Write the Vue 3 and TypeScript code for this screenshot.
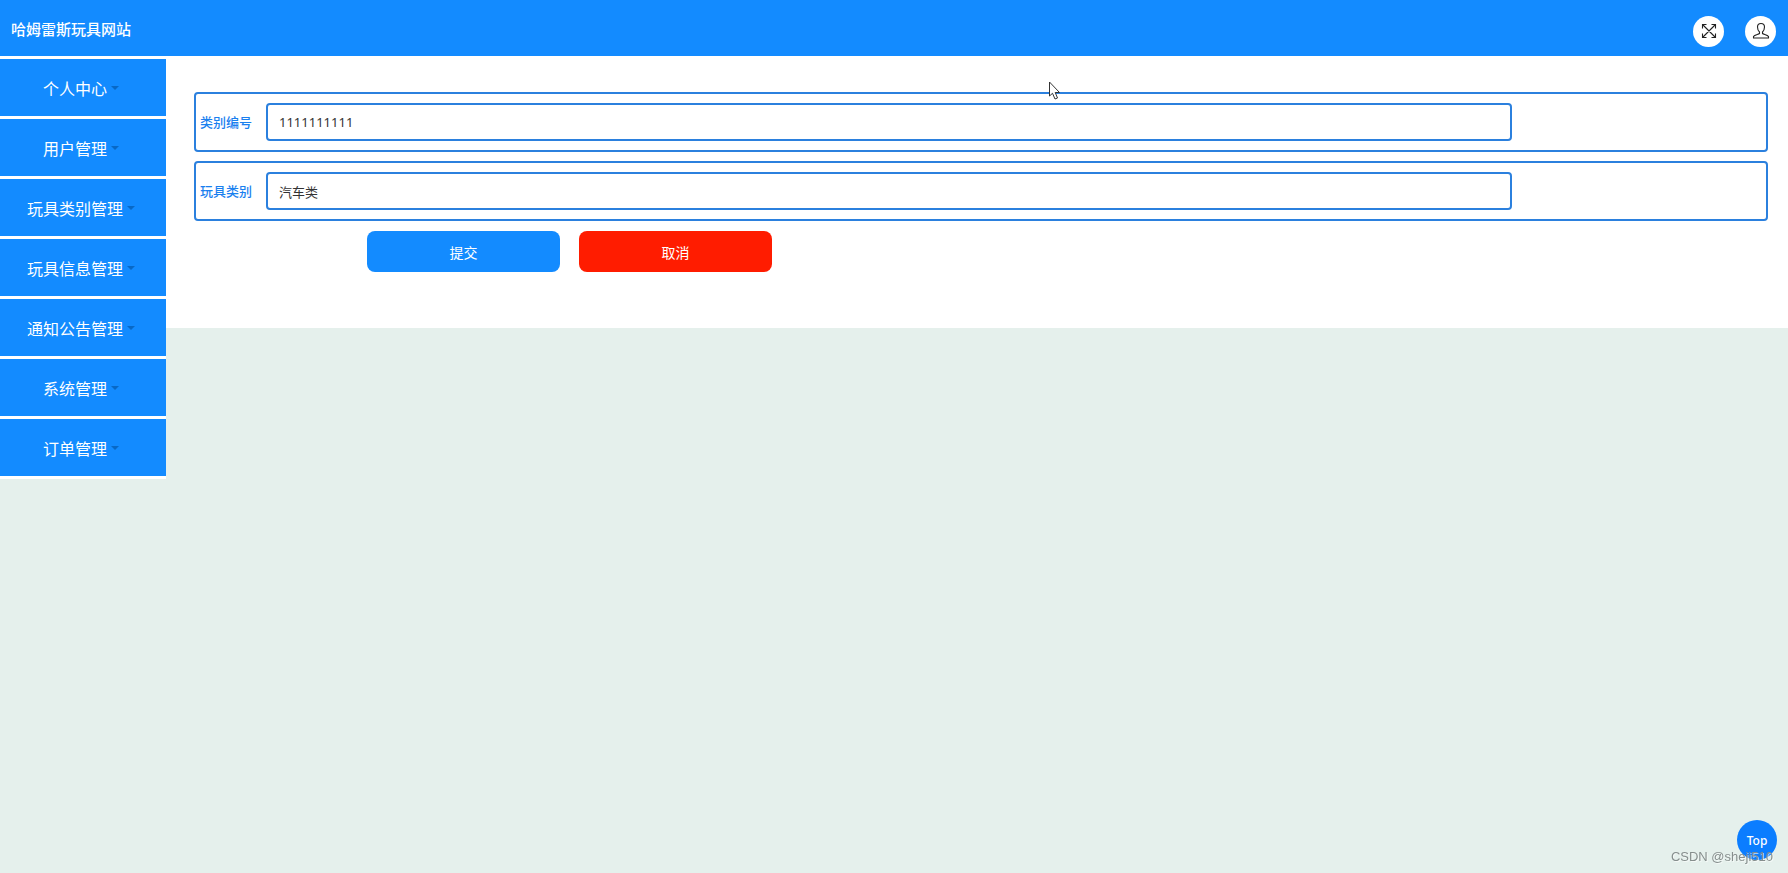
<script setup lang="ts">
import { ref } from 'vue'

interface Field {
  id: string
  label: string
  value: string
}

const menus: string[] = ['个人中心', '用户管理', '玩具类别管理', '玩具信息管理', '通知公告管理', '系统管理', '订单管理']

const fields = ref<Field[]>([
  { id: 'category-no', label: '类别编号', value: '1111111111' },
  { id: 'category-name', label: '玩具类别', value: '汽车类' },
])
</script>

<template>
  <div class="page">
    <header class="topbar">
      <h1 class="brand">哈姆雷斯玩具网站</h1>
      <div class="tools">
        <button class="round" type="button" aria-label="全屏">
          <svg width="16" height="16" viewBox="0 0 16 16" fill="none" stroke="#222" stroke-width="1.1">
            <path d="M1.500 1.500 14.500 14.500M14.500 1.500 1.500 14.500M1.500 5.500V1.500H5.500M10.500 1.500H14.500V5.500M14.500 10.500V14.500H10.500M5.500 14.500H1.500V10.500" />
          </svg>
        </button>
        <button class="round" type="button" aria-label="个人中心">
          <svg width="18" height="18" viewBox="0 0 18 18" fill="none" stroke="#222" stroke-width="1.1" stroke-linejoin="round">
            <path d="M9 1.500C6.800 1.500 5.500 2.800 5.500 5C5.500 7.500 6.500 9 7.500 10V11.500C6.500 12.500 2.500 12.600 1.500 14.500V16H16.500V14.500C15.500 12.600 11.500 12.500 10.500 11.500V10C11.500 9 12.500 7.500 12.500 5C12.500 2.800 11.200 1.500 9 1.500Z" />
          </svg>
        </button>
      </div>
    </header>

    <div class="body">
      <nav class="sidebar">
        <button v-for="menu in menus" :key="menu" class="menu" type="button">
          {{ menu }}<span class="caret"></span>
        </button>
      </nav>

      <main class="content">
        <form class="form" @submit.prevent>
          <div v-for="field in fields" :key="field.id" class="group">
            <label class="label" :for="field.id">{{ field.label }}</label>
            <input :id="field.id" v-model="field.value" class="input" type="text" />
          </div>
          <div class="actions">
            <button class="action submit" type="submit">提交</button>
            <button class="action cancel" type="button">取消</button>
          </div>
        </form>
      </main>
    </div>

    <a class="to-top" href="#">Top</a>
    <span class="watermark">CSDN @sheji510</span>
    <svg class="cursor" width="14" height="20" viewBox="0 0 14 20" fill="#fff" stroke="#333" stroke-width="1">
      <path d="M1.500 1V15L4.500 12.300L7 18L9.500 17L7.200 11.500H11.500Z" />
    </svg>
  </div>
</template>

<style>
body {
  margin: 0;
  background: #e5f0ec;
}
</style>

<style scoped>
.page {
  min-height: 100vh;
  font-family: "Noto Sans", "Noto Sans CJK SC", sans-serif;
  background: #e5f0ec;
}

.page * {
  box-sizing: border-box;
}

button,
input {
  font-family: inherit;
}

.topbar {
  display: flex;
  align-items: center;
  justify-content: space-between;
  height: 56px;
  padding: 2px 12px 0 11px;
  background: #138bff;
}

.brand {
  margin: 0;
  font-size: 15px;
  font-weight: 500;
  line-height: 24px;
  color: #fff;
}

.tools {
  display: flex;
  gap: 21px;
  padding-top: 4px;
}

.round {
  display: flex;
  align-items: center;
  justify-content: center;
  width: 31px;
  height: 31px;
  padding: 0;
  border: 0;
  border-radius: 50%;
  background: #fff;
}

.body {
  display: flex;
  align-items: flex-start;
}

.sidebar {
  display: flex;
  flex: none;
  flex-direction: column;
  gap: 3px;
  width: 166px;
  padding: 3px 0;
  background: #fff;
}

.menu {
  display: flex;
  align-items: center;
  justify-content: center;
  height: 57px;
  padding: 2px 4px 0 0;
  border: 0;
  background: #138bff;
  color: #fff;
  font-size: 16px;
  line-height: 24px;
}

.caret {
  margin: 0 0 2px 4px;
  border: 4px solid transparent;
  border-top-color: #0868c6;
  border-bottom: 0;
}

.content {
  flex: 1;
  min-width: 0;
  padding: 36px 20px 56px 28px;
  background: #fff;
}

.form {
  display: flex;
  flex-direction: column;
  gap: 9px;
}

.group {
  display: flex;
  align-items: center;
  padding: 9px 0 9px 4px;
  border: 2px solid #2b80de;
  border-radius: 4px;
}

.label {
  flex: none;
  width: 66px;
  color: #1a80ef;
  font-size: 13px;
  font-weight: 500;
  line-height: 20px;
}

.input {
  width: calc(80% - 7px);
  height: 38px;
  padding: 0 11px;
  border: 2px solid #2b80de;
  border-radius: 4px;
  outline: 0;
  background: #fff;
  color: #333;
  font-size: 13px;
}

.actions {
  display: flex;
  gap: 19px;
  padding: 1px 0 0 173px;
}

.action {
  width: 193px;
  height: 41px;
  padding: 0;
  border: 0;
  border-radius: 8px;
  color: #fff;
  font-size: 14px;
}

.submit {
  background: #138bff;
}

.cancel {
  background: #ff1c00;
}

.to-top {
  position: fixed;
  right: 11px;
  bottom: 13px;
  width: 40px;
  height: 40px;
  border-radius: 50%;
  background: #0b7dff;
  color: #fff;
  font-size: 12px;
  font-weight: 500;
  line-height: 42px;
  text-align: center;
  text-decoration: none;
}

.watermark {
  position: fixed;
  right: 15px;
  bottom: 8px;
  color: #868e8d;
  font-family: "Liberation Sans", sans-serif;
  font-size: 13px;
  line-height: 16px;
  text-shadow: 1px 1px 0 #fff9;
}

.cursor {
  position: fixed;
  top: 81px;
  left: 1048px;
}
</style>
